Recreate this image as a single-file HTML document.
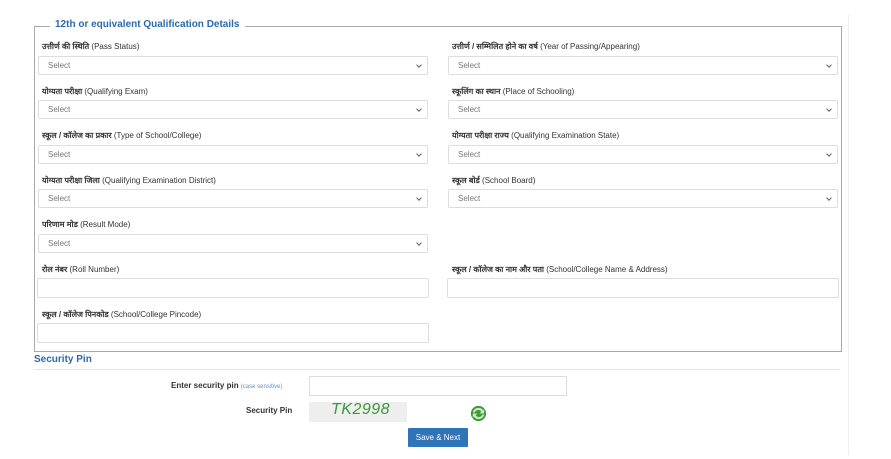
<!DOCTYPE html>
<html><head><meta charset="utf-8"><style>
body{margin:0;width:891px;height:459px;background:#fff;font-family:"Liberation Sans","Noto Sans CJK SC",sans-serif;position:relative;overflow:hidden}
.a{position:absolute}
.fs{left:34px;top:26px;width:806px;height:324px;border:1px solid #a8a8a8}
.lg{left:50px;top:19px;background:#fff;padding:0 5px;color:#2d6aa8;font-weight:bold;font-size:10px}
.lb{font-size:8px;color:#333;font-weight:bold;white-space:nowrap}
.lb span{font-weight:normal}
.sel{width:390px;height:19px;border:1px solid #ddd;border-radius:2px;box-sizing:border-box;font-size:8px;color:#777;line-height:17px;padding-left:9px}
.sel:after{content:"";position:absolute;right:6px;top:6px;width:3px;height:3px;border-right:1px solid #666;border-bottom:1px solid #666;transform:rotate(45deg)}
.inp{width:392px;height:20px;border:1px solid #ddd;border-radius:2px;box-sizing:border-box}
</style></head><body>
<div class="a fs"></div>
<div class="a lg">12th or equivalent Qualification Details</div>
<div class="a" style="left:848px;top:15px;width:1px;height:440px;background:#f0f0f0"></div>

<div class="a lb" style="left:42px;top:41px">उत्तीर्ण की स्थिति <span>(Pass Status)</span></div>
<div class="a sel" style="left:38px;top:56px">Select</div>
<div class="a lb" style="left:452px;top:41px">उत्तीर्ण / सम्मिलित होने का वर्ष <span>(Year of Passing/Appearing)</span></div>
<div class="a sel" style="left:448px;top:56px">Select</div>

<div class="a lb" style="left:42px;top:86px">योग्यता परीक्षा <span>(Qualifying Exam)</span></div>
<div class="a sel" style="left:38px;top:100px">Select</div>
<div class="a lb" style="left:452px;top:86px">स्कूलिंग का स्थान <span>(Place of Schooling)</span></div>
<div class="a sel" style="left:448px;top:100px">Select</div>

<div class="a lb" style="left:42px;top:130px">स्कूल / कॉलेज का प्रकार <span>(Type of School/College)</span></div>
<div class="a sel" style="left:38px;top:145px">Select</div>
<div class="a lb" style="left:452px;top:130px">योग्यता परीक्षा राज्य <span>(Qualifying Examination State)</span></div>
<div class="a sel" style="left:448px;top:145px">Select</div>

<div class="a lb" style="left:42px;top:175px">योग्यता परीक्षा जिला <span>(Qualifying Examination District)</span></div>
<div class="a sel" style="left:38px;top:189px">Select</div>
<div class="a lb" style="left:452px;top:175px">स्कूल बोर्ड <span>(School Board)</span></div>
<div class="a sel" style="left:448px;top:189px">Select</div>

<div class="a lb" style="left:42px;top:219px">परिणाम मोड <span>(Result Mode)</span></div>
<div class="a sel" style="left:38px;top:234px">Select</div>

<div class="a lb" style="left:42px;top:264px">रोल नंबर <span>(Roll Number)</span></div>
<div class="a inp" style="left:37px;top:278px"></div>
<div class="a lb" style="left:452px;top:264px">स्कूल / कॉलेज का नाम और पता <span>(School/College Name &amp; Address)</span></div>
<div class="a inp" style="left:447px;top:278px"></div>

<div class="a lb" style="left:42px;top:309px">स्कूल / कॉलेज पिनकोड <span>(School/College Pincode)</span></div>
<div class="a inp" style="left:37px;top:323px"></div>

<div class="a" style="left:34px;top:354px;color:#2d6aa8;font-weight:bold;font-size:10px">Security Pin</div>
<div class="a" style="left:34px;top:369px;width:806px;height:1px;background:#e6e6e6"></div>

<div class="a lb" style="left:171px;top:381px;color:#333">Enter security pin <span style="color:#6a8fc0;font-size:6px">(case sensitive)</span></div>
<div class="a" style="left:309px;top:376px;width:258px;height:20px;border:1px solid #ddd;box-sizing:border-box"></div>
<div class="a lb" style="left:246px;top:406px">Security Pin</div>
<div class="a" style="left:309px;top:402px;width:98px;height:20px;background:#eee"></div>
<div class="a" style="left:331px;top:401px;font-size:16px;font-style:italic;color:#3a9a3a;letter-spacing:0.5px">TK2998</div>
<svg class="a" style="left:469px;top:404px" width="19" height="19" viewBox="0 0 20 20"><circle cx="10" cy="10" r="8" fill="#3a9a3a"/><path d="M4 9a6 6 0 0 1 11-2l1-2v5h-5l2-2a4 4 0 0 0-7 1z" fill="#cfe8c0"/><path d="M16 11a6 6 0 0 1-11 2l-1 2v-5h5l-2 2a4 4 0 0 0 7-1z" fill="#cfe8c0"/></svg>
<div class="a" style="left:408px;top:428px;width:60px;height:19px;background:#2f73b8;color:#fff;font-size:8px;line-height:19px;text-align:center;border-radius:1px">Save &amp; Next</div>
</body></html>
